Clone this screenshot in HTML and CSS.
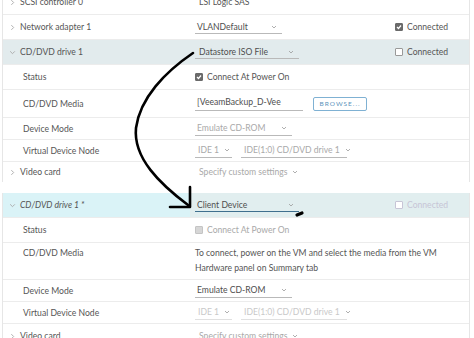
FILE: index.html
```html
<!DOCTYPE html>
<html lang="en">
<head>
    <meta charset="UTF-8">
    <title>Edit Settings - CD/DVD drive</title>
    <link rel="stylesheet" href="styles.css">
</head>
<body>
<div class="page">
    <!-- before: datastore ISO -->
    <div class="panel panel-top">
        <div class="row">
            <div class="label head"><svg class="chev" viewBox="0 0 6 6"><path d="M2 1 L4 3 L2 5"/></svg>SCSI controller 0</div>
            <div class="value"><span class="plain">LSI Logic SAS</span></div>
            <div class="extra"></div>
        </div>
        <div class="row">
            <div class="label head"><svg class="chev" viewBox="0 0 6 6"><path d="M2 1 L4 3 L2 5"/></svg>Network adapter 1</div>
            <div class="value"><span class="select w-vlan">VLANDefault<svg class="down" viewBox="0 0 6 4"><path d="M1 1 L3 3 L5 1"/></svg></span></div>
            <div class="extra"><span class="cb on"><svg viewBox="0 0 6 6"><path d="M1 3 L2.5 4.5 L5 1.5"/></svg></span>Connected</div>
        </div>
        <div class="row row-open">
            <div class="label head"><svg class="chev" viewBox="0 0 6 6"><path d="M1 2 L3 4 L5 2"/></svg>CD/DVD drive 1</div>
            <div class="value"><span class="select w-iso">Datastore ISO File<svg class="down" viewBox="0 0 6 4"><path d="M1 1 L3 3 L5 1"/></svg></span></div>
            <div class="extra"><span class="cb"></span>Connected</div>
        </div>
        <div class="row">
            <div class="label sub">Status</div>
            <div class="value"><span class="cb on"><svg viewBox="0 0 6 6"><path d="M1 3 L2.5 4.5 L5 1.5"/></svg></span>Connect At Power On</div>
            <div class="extra"></div>
        </div>
        <div class="row row-media">
            <div class="label sub">CD/DVD Media</div>
            <div class="value media">
                <span class="input">[VeeamBackup_D-Vee</span>
                <span class="browse">BROWSE...</span>
            </div>
            <div class="extra"></div>
        </div>
        <div class="row row-short">
            <div class="label sub">Device Mode</div>
            <div class="value"><span class="select w-mode faint">Emulate CD-ROM<svg class="down" viewBox="0 0 6 4"><path d="M1 1 L3 3 L5 1"/></svg></span></div>
            <div class="extra"></div>
        </div>
        <div class="row row-short">
            <div class="label sub">Virtual Device Node</div>
            <div class="value node">
                <span class="select w-ide faint">IDE 1<svg class="down" viewBox="0 0 6 4"><path d="M1 1 L3 3 L5 1"/></svg></span>
                <span class="select w-drive faint">IDE(1:0) CD/DVD drive 1<svg class="down" viewBox="0 0 6 4"><path d="M1 1 L3 3 L5 1"/></svg></span>
            </div>
            <div class="extra"></div>
        </div>
        <div class="row row-last">
            <div class="label head"><svg class="chev" viewBox="0 0 6 6"><path d="M2 1 L4 3 L2 5"/></svg>Video card</div>
            <div class="value"><span class="plain faint">Specify custom settings<svg class="down" viewBox="0 0 6 4"><path d="M1 1 L3 3 L5 1"/></svg></span></div>
            <div class="extra"></div>
        </div>
    </div>

    <!-- after: client device -->
    <div class="panel panel-bottom">
        <div class="row row-edit">
            <div class="label head"><svg class="chev" viewBox="0 0 6 6"><path d="M1 2 L3 4 L5 2"/></svg><em>CD/DVD drive 1 *</em></div>
            <div class="value"><span class="select w-client focus">Client Device<svg class="down" viewBox="0 0 6 4"><path d="M1 1 L3 3 L5 1"/></svg></span></div>
            <div class="extra off"><span class="cb"></span>Connected</div>
        </div>
        <div class="row">
            <div class="label sub">Status</div>
            <div class="value faint"><span class="cb fill"></span>Connect At Power On</div>
            <div class="extra"></div>
        </div>
        <div class="row row-note">
            <div class="label sub">CD/DVD Media</div>
            <div class="value note">To connect, power on the VM and select the media from the VM<br>Hardware panel on Summary tab</div>
            <div class="extra"></div>
        </div>
        <div class="row row-short">
            <div class="label sub">Device Mode</div>
            <div class="value"><span class="select w-mode">Emulate CD-ROM<svg class="down" viewBox="0 0 6 4"><path d="M1 1 L3 3 L5 1"/></svg></span></div>
            <div class="extra"></div>
        </div>
        <div class="row row-short">
            <div class="label sub">Virtual Device Node</div>
            <div class="value node">
                <span class="select w-ide pale">IDE 1<svg class="down" viewBox="0 0 6 4"><path d="M1 1 L3 3 L5 1"/></svg></span>
                <span class="select w-drive pale">IDE(1:0) CD/DVD drive 1<svg class="down" viewBox="0 0 6 4"><path d="M1 1 L3 3 L5 1"/></svg></span>
            </div>
            <div class="extra"></div>
        </div>
        <div class="row">
            <div class="label head"><svg class="chev" viewBox="0 0 6 6"><path d="M2 1 L4 3 L2 5"/></svg>Video card</div>
            <div class="value"><span class="plain faint">Specify custom settings<svg class="down" viewBox="0 0 6 4"><path d="M1 1 L3 3 L5 1"/></svg></span></div>
            <div class="extra"></div>
        </div>
    </div>

    <!-- pen annotation drawn over the screenshot -->
    <svg class="pen" viewBox="0 0 474 338">
        <path d="M193 53 C165 72 140 98 136 128 C133 158 160 184 188 205"/>
        <path d="M190 187 L190 207 L170 207"/>
        <path class="dot" d="M297 215 L302 213"/>
    </svg>
</div>
</body>
</html>
```

FILE: styles.css
```css
body {
    margin: 0;
    background: #fff;
    font-family: Lato, "Liberation Sans", sans-serif;
    font-size: 8.6px;
    color: #565656;
    overflow: hidden;
}
.page {
    position: relative;
    width: 474px;
    height: 338px;
    overflow: hidden;
}
.panel {
    margin-left: 2px;
    width: 466px;
    border-left: 1px solid #e6e6e6;
    border-right: 1px solid #e6e6e6;
}
.panel-top {
    margin-top: -10px;
}
.panel-bottom {
    margin-top: 11px;
}
.row {
    display: grid;
    grid-template-columns: 192px 197px 1fr;
    align-items: center;
    height: 24px;
    border-bottom: 1px solid #ececec;
    white-space: nowrap;
}
.row-open {
    background: #e2ebed;
}
.row-edit {
    background: linear-gradient(to right, #daf3f7 187px, #e1eeef 187px);
}
.row-media {
    height: 27px;
}
.row-short {
    height: 21px;
}
.row-last {
    height: 20px;
    border-bottom: none;
}
.row-note {
    height: 36px;
    align-items: start;
}
.row-note .label {
    padding-top: 5px;
}
.label {
    display: flex;
    align-items: center;
    color: #555;
}
.label.head {
    padding-left: 6px;
}
.label.sub {
    padding-left: 20px;
}
.label em {
    font-style: italic;
}
.chev {
    width: 7px;
    height: 7px;
    margin-right: 4px;
    fill: none;
    stroke: #aaa;
    stroke-width: 0.8;
}
.value {
    display: flex;
    align-items: center;
    color: #555;
}
.select {
    display: flex;
    align-items: center;
    height: 13px;
    padding-left: 2px;
    border-bottom: 1px solid #b9b9b9;
    color: #4e4e4e;
}
.select .down, .plain .down {
    flex-shrink: 0;
    width: 6px;
    height: 4px;
    margin-left: auto;
    margin-right: 5px;
    fill: none;
    stroke: #9a9a9a;
    stroke-width: 0.8;
}
.select .down {
    padding-left: 5px;
}
.plain {
    display: flex;
    align-items: center;
    padding-left: 4px;
}
.plain .down {
    margin-left: 4px;
}
.w-vlan { width: 85px; }
.w-iso { width: 100px; padding-left: 4px; }
.w-mode { width: 95px; }
.w-ide { width: 34px; padding-left: 3px; }
.w-drive { width: 103px; padding-left: 3px; }
.w-client { width: 102px; }
.node {
    gap: 9px;
}
.focus {
    border-bottom: 1px solid #3f6f8e;
}
.faint {
    color: #a9a9a9;
}
.pale {
    color: #c9c9c9;
    border-bottom-color: #e0e0e0;
}
.media {
    gap: 10px;
}
.input {
    width: 106px;
    height: 13px;
    padding-left: 2px;
    border-bottom: 1px solid #b9b9b9;
    color: #4e4e4e;
    overflow: hidden;
}
.browse {
    width: 52px;
    height: 12px;
    line-height: 12px;
    border: 1px solid #7fb1d3;
    border-radius: 2px;
    color: #5b93bb;
    font-size: 6.5px;
    letter-spacing: 1px;
    text-align: center;
}
.note {
    display: block;
    line-height: 15px;
    padding-top: 3px;
}
.extra {
    display: flex;
    align-items: center;
    padding-left: 3px;
    color: #555;
}
.extra.off {
    color: #c7c5d6;
}
.cb {
    display: inline-flex;
    width: 6px;
    height: 6px;
    margin-right: 4px;
    border: 1px solid #999;
    border-radius: 1px;
    background: #fff;
}
.cb.on {
    background: #6a6a6a;
    border-color: #6a6a6a;
}
.cb.on svg {
    width: 6px;
    height: 6px;
    fill: none;
    stroke: #fff;
    stroke-width: 1.2;
}
.cb.fill {
    background: #d6d6d6;
    border-color: #c4c4c4;
}
.extra.off .cb {
    border-color: #c7c5d6;
}
.pen {
    position: absolute;
    left: 0;
    top: 0;
    width: 474px;
    height: 338px;
    fill: none;
    stroke: #000;
    stroke-width: 2.6;
    stroke-linecap: round;
    stroke-linejoin: round;
}
.pen .dot {
    stroke-width: 3.2;
}
```
